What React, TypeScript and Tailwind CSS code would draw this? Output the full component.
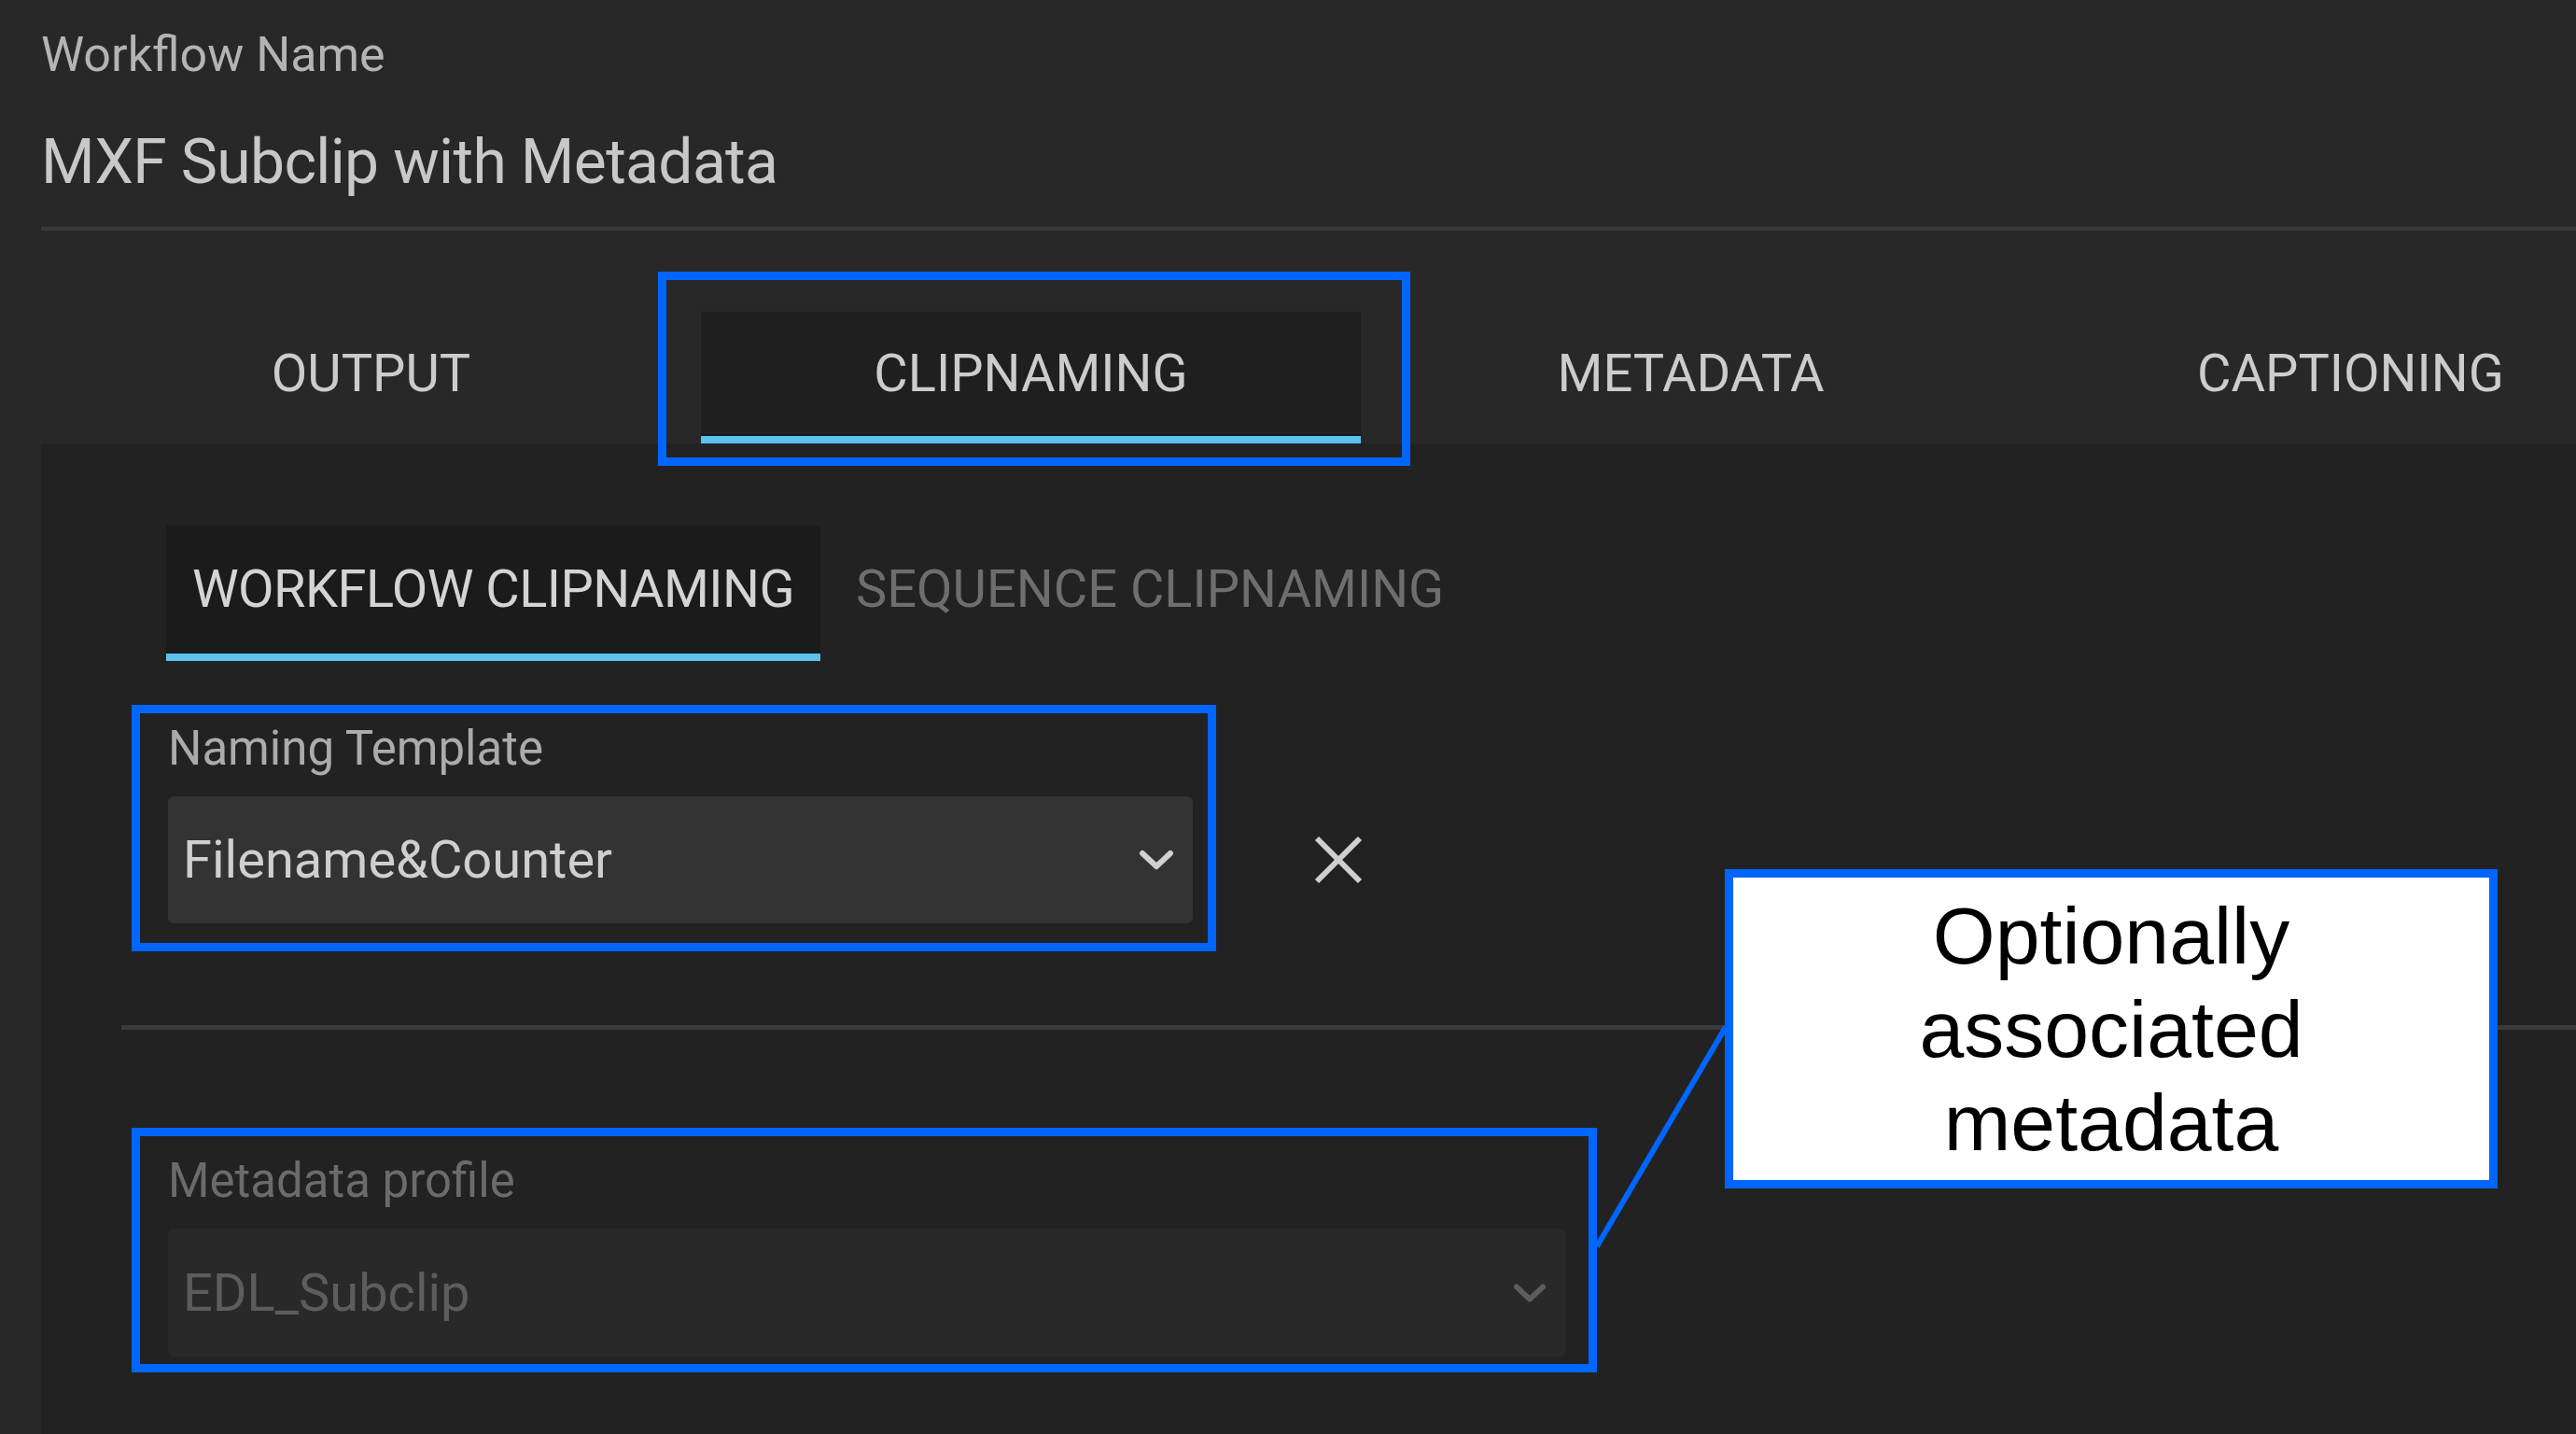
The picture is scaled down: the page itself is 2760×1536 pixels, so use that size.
import React from "react";

const tabs = ["OUTPUT", "CLIPNAMING", "METADATA", "CAPTIONING"];

const Chevron = ({ className }: { className: string }) => (
  <svg
    viewBox="0 0 38 22"
    className={className}
    fill="none"
    stroke="currentColor"
    strokeWidth="6"
    strokeLinecap="round"
    strokeLinejoin="round"
  >
    <polyline points="4,4 19,18 34,4" />
  </svg>
);

// blue highlight frame drawn over the screenshot
const Mark = ({ className }: { className: string }) => (
  <div className={`pointer-events-none absolute border-[9px] border-[#0066ff] ${className}`} />
);

export default function App() {
  return (
    <div className="relative h-[1536px] w-[2760px] overflow-hidden bg-[#282828] font-['Roboto',sans-serif]">
      <header className="pl-[44px] pt-[28px]">
        <div className="h-[62px] text-[52px] leading-[62px] text-[#b4b4b4]">Workflow Name</div>
        <div className="mt-[44px] h-[80px] text-[66px] leading-[80px] tracking-[-0.01em] text-[#c8c8c8]">
          MXF Subclip with Metadata
        </div>
        <div className="mt-[29px] h-[4px] bg-[#3a3a3a]" />
      </header>

      <nav className="mt-[87px] flex pl-[44px]">
        {tabs.map((label) => {
          const active = label === "CLIPNAMING";
          return (
            <div
              key={label}
              className={`relative flex h-[141px] w-[707px] shrink-0 flex-col ${active ? "bg-[#1f1f1f]" : ""}`}
            >
              {active ? <Mark className="-top-[43px] -right-[53px] -bottom-[24px] -left-[46px]" /> : null}
              <div className="flex flex-1 items-center justify-center text-[56px] text-[#cccccc]">{label}</div>
              <div className={`h-[10px] ${active ? "border-t-2 border-[#0c1a22] bg-[#5bc2ec]" : ""}`} />
            </div>
          );
        })}
      </nav>

      <section className="ml-[44px] h-[1061px] bg-[#222222] pt-[88px]">
        <div className="flex gap-[8px] pl-[134px]">
          <div className="flex h-[145px] flex-col bg-[#1b1b1b]">
            <div className="flex flex-1 items-center px-[28px] text-[56px] tracking-[-0.01em] text-[#d4d4d4]">
              WORKFLOW CLIPNAMING
            </div>
            <div className="h-[10px] border-t-2 border-[#0c1a22] bg-[#5bc2ec]" />
          </div>
          <div className="flex h-[145px] flex-col">
            <div className="flex flex-1 items-center px-[30px] text-[56px] text-[#6e6e6e]">
              SEQUENCE CLIPNAMING
            </div>
            <div className="h-[10px]" />
          </div>
        </div>

        <div className="mt-[64px] flex items-end pl-[136px]">
          <div className="relative w-[1098px]">
            <Mark className="-top-[17px] -right-[25px] -bottom-[30px] -left-[39px]" />
            <div className="h-[60px] text-[51px] leading-[60px] text-[#ababab]">Naming Template</div>
            <div className="mt-[21px] flex h-[136px] items-center justify-between rounded-[6px] bg-[#333333] pl-[16px] pr-[20px]">
              <span className="text-[56px] text-[#cfcfcf]">Filename&amp;Counter</span>
              <Chevron className="h-[22px] w-[38px] text-[#d0d0d0]" />
            </div>
          </div>
          <div className="ml-[130px] flex h-[136px] items-center">
            <svg viewBox="0 0 52 52" className="h-[52px] w-[52px]" fill="none" stroke="#cfcfcf" strokeWidth="6">
              <line x1="3" y1="3" x2="49" y2="49" />
              <line x1="49" y1="3" x2="3" y2="49" />
            </svg>
          </div>
        </div>

        <div className="ml-[86px] mt-[109px] h-[5px] bg-[#3a3a3a]" />

        <div className="mt-[132px] pl-[136px]">
          <div className="relative w-[1497px]">
            <Mark className="-top-[27px] -right-[34px] -bottom-[17px] -left-[39px]" />
            <div className="h-[60px] text-[51px] leading-[60px] text-[#6b6b6b]">Metadata profile</div>
            <div className="mt-[21px] flex h-[137px] items-center justify-between rounded-[6px] bg-[#292929] pl-[16px] pr-[20px]">
              <span className="text-[56px] text-[#5d5d5d]">EDL_Subclip</span>
              <Chevron className="h-[22px] w-[36px] text-[#5d5d5d]" />
            </div>
          </div>
        </div>
      </section>

      <svg className="pointer-events-none absolute left-[1700px] top-[1090px] h-[260px] w-[160px]" viewBox="0 0 160 260">
        <line x1="11" y1="245" x2="149" y2="10" stroke="#0066ff" strokeWidth="6" />
      </svg>

      <div className="absolute left-[1848px] top-[931px] flex h-[342px] w-[828px] flex-col items-center justify-center border-[9px] border-[#0066ff] bg-white font-['Liberation_Sans',Arial,sans-serif] text-[86px] leading-[100px] text-black">
        <span>Optionally</span>
        <span>associated</span>
        <span>metadata</span>
      </div>
    </div>
  );
}
